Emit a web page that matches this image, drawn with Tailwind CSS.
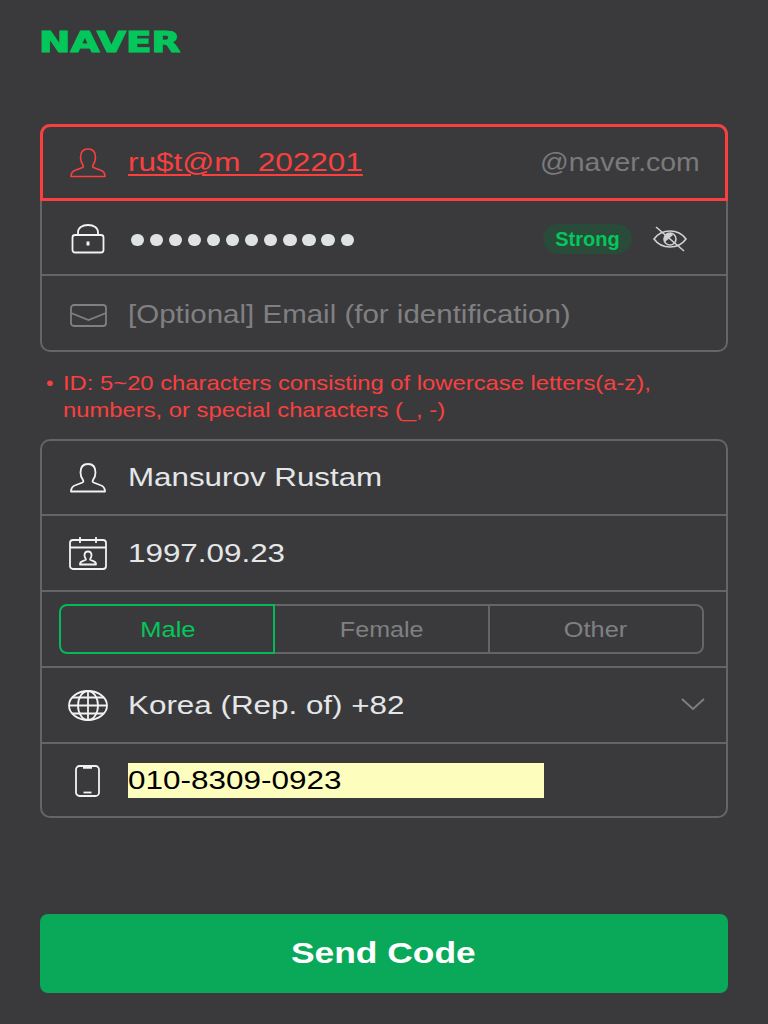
<!DOCTYPE html>
<html lang="en">
<head>
    <meta charset="UTF-8">
    <meta name="viewport" content="width=device-width, initial-scale=1.0">
    <title>NAVER Sign up</title>
    <script src="https://cdn.jsdelivr.net/npm/@tailwindcss/browser@4"></script>
</head>

<body class="bg-[#3a3a3c] font-['Liberation_Sans',Arial,sans-serif]">
<div class="h-[1024px] overflow-hidden px-10 flex flex-col">

    <!-- logo -->
    <div class="h-[124px] pt-[26px]">
        <span class="inline-block -ml-[1px] origin-left scale-x-[1.34] font-['DejaVu_Sans',sans-serif] font-bold text-[28px] leading-[34px] text-[#03c75a] [-webkit-text-stroke:1.2px_#03c75a]">NAVER</span>
    </div>

    <!-- account card -->
    <div class="h-[228px] border-2 border-[#656567] rounded-[10px] flex flex-col">
        <div class="-mx-[2px] -mt-[2px] h-[77px] shrink-0 border-[3px] border-[#f9403f] rounded-t-[10px] flex items-center">
            <div class="w-[40px] ml-[25px] mr-[20px] flex justify-center">
                <svg width="36" height="30" viewBox="0 0 36 30" fill="none" stroke="#f9403f" stroke-width="1.6" stroke-linejoin="round"><path d="M1 28.500c0-4 1.500-5.500 5-6.500l6.500-2.500c1-.5 1-1.500.5-2.500-1.500-2-2.500-4-2.500-7.500C10.500 4 13.500 1 18 1s7.500 3 7.500 8.500c0 3.500-1 5.500-2.500 7.500-.5 1-.5 2 .5 2.500L30 22c3.500 1 5 2.500 5 6.500z"/></svg>
            </div>
            <span class="inline-block origin-left scale-x-[1.21] text-[26px] text-[#f9403f] underline underline-offset-[3px] decoration-[1.5px]">ru$t@m_202201</span>
            <span class="inline-block ml-auto mr-[25px] origin-right scale-x-[1.135] text-[25px] text-[#7a7a7c]">@naver.com</span>
        </div>
        <div class="h-[75px] shrink-0 border-b-2 border-[#656567] flex items-center pt-[2px]">
            <div class="w-[40px] ml-[26px] mr-[22.500px] flex justify-center">
                <svg width="34" height="30" viewBox="0 0 34 30" fill="none" stroke="#f2f2f2" stroke-width="1.8"><rect x="1.500" y="11" width="31" height="17.500" rx="2.500"/><path d="M7 11V8.500C7 4 11 1 17 1s10 3 10 7.500V11"/><path d="M17 17.500v4" stroke-width="3"/></svg>
            </div>
            <div class="flex gap-[5.8px] mt-[2px]">
                <i class="w-[13.3px] h-[12px] rounded-full bg-[#dfe2e5]"></i><i class="w-[13.3px] h-[12px] rounded-full bg-[#dfe2e5]"></i><i class="w-[13.3px] h-[12px] rounded-full bg-[#dfe2e5]"></i><i class="w-[13.3px] h-[12px] rounded-full bg-[#dfe2e5]"></i><i class="w-[13.3px] h-[12px] rounded-full bg-[#dfe2e5]"></i><i class="w-[13.3px] h-[12px] rounded-full bg-[#dfe2e5]"></i><i class="w-[13.3px] h-[12px] rounded-full bg-[#dfe2e5]"></i><i class="w-[13.3px] h-[12px] rounded-full bg-[#dfe2e5]"></i><i class="w-[13.3px] h-[12px] rounded-full bg-[#dfe2e5]"></i><i class="w-[13.3px] h-[12px] rounded-full bg-[#dfe2e5]"></i><i class="w-[13.3px] h-[12px] rounded-full bg-[#dfe2e5]"></i><i class="w-[13.3px] h-[12px] rounded-full bg-[#dfe2e5]"></i>
            </div>
            <span class="ml-auto w-[89px] h-[30px] rounded-full bg-[#2a4a3a] flex items-center justify-center text-[20px] font-bold text-[#03c75a]">Strong</span>
            <svg class="ml-[21px] mr-[39px]" width="34" height="26" viewBox="0 0 34 26" fill="none" stroke="#d0d0d0" stroke-width="1.600"><path d="M1 13c4-5.500 9.500-8 16-8s12 2.500 16 8c-4 5.500-9.500 8-16 8S5 18.500 1 13z"/><circle cx="17" cy="13" r="6"/><path d="M17 7a6 6 0 0 0-5 9l8-7a6 6 0 0 0-3-2z" fill="#d0d0d0" stroke="none"/><path d="M3 1l28 24"/></svg>
        </div>
        <div class="flex-1 flex items-center pt-[4px]">
            <div class="w-[40px] ml-[26px] mr-[20px] flex justify-center">
                <svg width="37" height="23" viewBox="0 0 37 23" fill="none" stroke="#808082" stroke-width="1.800"><rect x="1" y="1" width="35" height="21" rx="3"/><path d="M1 9l17.500 7L36 9"/></svg>
            </div>
            <span class="inline-block origin-left scale-x-[1.18] text-[25px] text-[#808082]">[Optional] Email (for identification)</span>
        </div>
    </div>

    <!-- error -->
    <div class="h-[87px] pt-[17px] flex text-[21px] leading-[27px] text-[#f9403f]">
        <span class="w-[23px] pl-[6px] shrink-0">•</span>
        <p class="origin-left scale-x-[1.133] whitespace-nowrap">ID: 5~20 characters consisting of lowercase letters(a-z),<br>numbers, or special characters (_, -)</p>
    </div>

    <!-- profile card -->
    <div class="h-[379px] border-2 border-[#656567] rounded-[10px] flex flex-col">
        <div class="h-[75px] shrink-0 border-b-2 border-[#656567] flex items-center">
            <div class="w-[40px] ml-[26px] mr-[20px] flex justify-center">
                <svg width="36" height="30" viewBox="0 0 36 30" fill="none" stroke="#f2f2f2" stroke-width="1.800" stroke-linejoin="round"><path d="M1 28.500c0-4 1.500-5.500 5-6.500l6.500-2.500c1-.5 1-1.500.5-2.500-1.500-2-2.500-4-2.500-7.500C10.500 4 13.500 1 18 1s7.500 3 7.500 8.500c0 3.500-1 5.500-2.500 7.500-.5 1-.5 2 .5 2.500L30 22c3.500 1 5 2.500 5 6.500z"/></svg>
            </div>
            <span class="inline-block origin-left scale-x-[1.205] text-[26px] text-[#e4e6e8]">Mansurov Rustam</span>
        </div>
        <div class="h-[76px] shrink-0 border-b-2 border-[#656567] flex items-center">
            <div class="w-[40px] ml-[26px] mr-[20px] flex justify-center">
                <svg width="38" height="34" viewBox="0 0 38 34" fill="none" stroke="#f2f2f2" stroke-width="1.800" stroke-linejoin="round"><rect x="1" y="4" width="36" height="29" rx="3"/><path d="M1 11.500h36M11 1v6M27 1v6"/><path d="M11 28.500c0-2 .8-2.700 2.500-3.300l3-1.200c.5-.3.500-.8.200-1.300-.7-1-1.200-2-1.200-3.400 0-2.300 1.500-3.800 3.500-3.800s3.500 1.500 3.500 3.800c0 1.400-.5 2.400-1.200 3.400-.3.500-.3 1 .2 1.300l3 1.200c1.700.6 2.500 1.300 2.500 3.300z"/></svg>
            </div>
            <span class="inline-block origin-left scale-x-[1.207] text-[26px] text-[#e4e6e8]">1997.09.23</span>
        </div>
        <div class="h-[76px] shrink-0 border-b-2 border-[#656567] flex items-center pl-[17px] pr-[22px]">
            <div class="w-full h-[50px] flex text-[22px]">
                <div class="w-[216px] border-2 border-[#03b95a] rounded-l-[8px] flex items-center justify-center text-[#03c75a] pl-[2px]"><span class="inline-block scale-x-[1.16]">Male</span></div>
                <div class="w-[215px] border-y-2 border-r-2 border-[#656567] flex items-center justify-center text-[#808082]"><span class="inline-block scale-x-[1.14]">Female</span></div>
                <div class="flex-1 border-y-2 border-r-2 border-[#656567] rounded-r-[8px] flex items-center justify-center text-[#808082]"><span class="inline-block scale-x-[1.15]">Other</span></div>
            </div>
        </div>
        <div class="h-[76px] shrink-0 border-b-2 border-[#656567] flex items-center">
            <div class="w-[40px] ml-[26px] mr-[20px] flex justify-center">
                <svg width="40" height="31" viewBox="0 0 40 31" fill="none" stroke="#f2f2f2" stroke-width="1.800"><ellipse cx="20" cy="15.500" rx="19" ry="14.500"/><ellipse cx="20" cy="15.500" rx="10" ry="14.500"/><path d="M20 1v29M1 15.500h38M4 7.500h32M4 23.500h32"/></svg>
            </div>
            <span class="inline-block origin-left scale-x-[1.207] text-[26px] text-[#e4e6e8]">Korea (Rep. of) +82</span>
            <svg class="ml-auto mr-[21px] -mt-[2px]" width="24" height="13" viewBox="0 0 24 13" fill="none" stroke="#808082" stroke-width="1.800"><path d="M1 1l11 10L23 1"/></svg>
        </div>
        <div class="flex-1 flex items-center">
            <div class="w-[40px] ml-[26px] mr-[20px] flex justify-center">
                <svg class="-ml-[1px] mt-[1px]" width="25" height="32" viewBox="0 0 25 32" fill="none" stroke="#f2f2f2" stroke-width="1.800"><rect x="1" y="1" width="23" height="30" rx="3.500"/><path d="M8 2.500h9" stroke-width="2.500"/><path d="M8.500 27.500h8"/></svg>
            </div>
            <div class="w-[416px] h-[35px] bg-[#fdfdbd] flex items-center text-[26px] text-black"><span class="inline-block origin-left scale-x-[1.21]">010-8309-0923</span></div>
        </div>
    </div>

    <!-- submit -->
    <button class="mt-[96px] h-[79px] w-full rounded-[8px] bg-[#0aa95a] text-white text-[30px] font-bold pb-[2px] pr-[2px]"><span class="inline-block scale-x-[1.18]">Send Code</span></button>

</div>
</body>
</html>
